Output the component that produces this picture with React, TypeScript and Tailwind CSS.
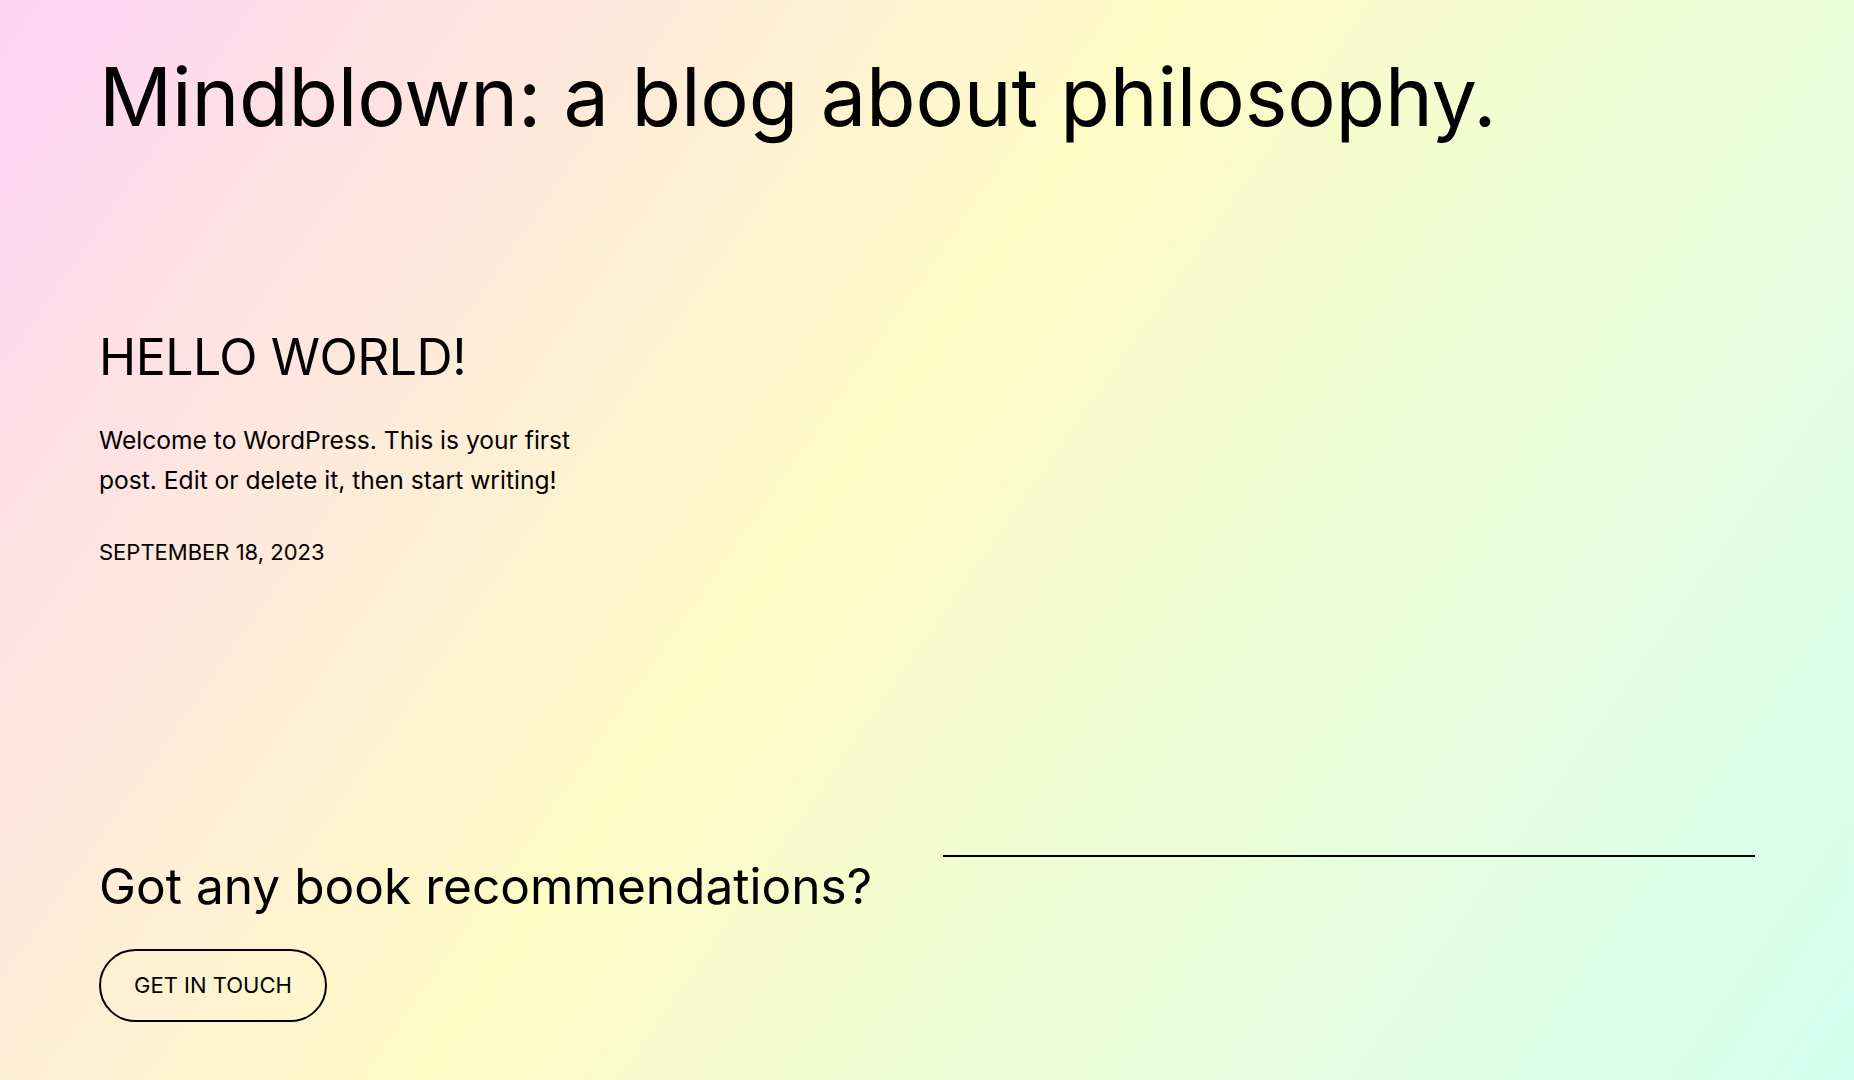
import React from 'react';

const font = { fontFamily: 'Inter, "Noto Sans", sans-serif' };

export default function App() {
  return (
    <div
      className="min-h-screen w-full bg-[linear-gradient(125deg,#ffd3f4_0%,#fffcc6_45%,#d3fff0_100%)] text-black"
      style={font}
    >
      <div className="px-[99px] pt-[48px]">
        <header>
          <h1 className="text-[81px] leading-[98.4px] font-normal tracking-[-0.2px]">
            Mindblown: a blog about philosophy.
          </h1>
        </header>

        <main className="mt-[181px] grid grid-cols-3 gap-8">
          <article className="max-w-[510px]">
            <h2 className="text-[50px] leading-[60px] font-normal uppercase tracking-[-0.5px]">Hello World!</h2>
            <p className="mt-[34px] text-[24.6px] leading-[39.6px]">
              Welcome to WordPress. This is your first post. Edit or delete it, then start writing!
            </p>
            <div className="mt-[37px] text-[22px] leading-[28.5px] uppercase">September 18, 2023</div>
          </article>
        </main>

        <footer className="mt-[289px] grid grid-cols-2 gap-8 pb-[58px]">
          <div>
            <h2 className="text-[49.6px] leading-[62.4px] font-normal">Got any book recommendations?</h2>
            <a
              href="#"
              className="mt-[31px] inline-block rounded-full border-2 border-black px-[33px] py-[22px] text-[22px] leading-[25px] uppercase"
            >
              Get in touch
            </a>
          </div>
          <div>
            <hr className="border-0 border-t-2 border-black" />
          </div>
        </footer>
      </div>
    </div>
  );
}
